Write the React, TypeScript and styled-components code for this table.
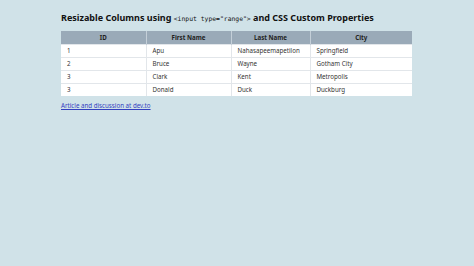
import React from "react";
import styled, { createGlobalStyle } from "styled-components";

const GlobalStyle = createGlobalStyle`
    html, body {
        margin: 0;
        padding: 0;
        background: #d0e2e8;
        font-family: "Noto Sans", "Open Sans", sans-serif;
    }
`;

const Page = styled.div`
    width: 474px;
    height: 266px;
    padding: 11px 0 0 61px;
    box-sizing: border-box;
`;

const Title = styled.h1`
    margin: 0 0 5px;
    font-size: 9px;
    font-weight: 700;
    color: #111;
    line-height: 14px;
    white-space: nowrap;

    code {
        font-family: "DejaVu Sans Mono", "Liberation Mono", monospace;
        font-size: 6.4px;
        font-weight: 400;
    }
`;

const Table = styled.table`
    border-collapse: collapse;
    table-layout: fixed;
    width: 351px;
    background: #fff;
    font-size: 6.2px;
    color: #333;
`;

const HeadCell = styled.th`
    height: 13px;
    padding: 0;
    box-sizing: border-box;
    background: #9aaab8;
    font-weight: 700;
    color: #222;
    text-align: center;
    border-left: 1px solid #c4cfd8;
    &:first-child {
        border-left: none;
    }
`;

const Row = styled.tr`
    border-top: 1px solid #e2e6ea;
`;

const Cell = styled.td`
    height: 12px;
    padding: 0 6px;
    border-left: 1px solid #e2e6ea;
    white-space: nowrap;
    overflow: hidden;
    &:first-child {
        border-left: none;
    }
`;

const Link = styled.a`
    display: block;
    width: max-content;
    margin-top: 5px;
    font-size: 6.2px;
    line-height: 9px;
    color: #3340c0;
    text-decoration: underline;
`;

const columns = [
    { label: "ID", w: 85 },
    { label: "First Name", w: 85 },
    { label: "Last Name", w: 79 },
    { label: "City", w: 102 },
];

const rows = [
    ["1", "Apu", "Nahasapeemapetilon", "Springfield"],
    ["2", "Bruce", "Wayne", "Gotham City"],
    ["3", "Clark", "Kent", "Metropolis"],
    ["3", "Donald", "Duck", "Duckburg"],
];

const App: React.FC = () => (
    <Page>
      <GlobalStyle />
      <Title>
        Resizable Columns using <code>&lt;input type="range"&gt;</code> and CSS Custom Properties
      </Title>
      <Table>
        <colgroup>
          {columns.map((c) => (
            <col key={c.label} style={{ width: c.w }} />
          ))}
        </colgroup>
        <thead>
          <tr>
            {columns.map((c) => (
              <HeadCell key={c.label}>{c.label}</HeadCell>
            ))}
          </tr>
        </thead>
        <tbody>
          {rows.map((r, i) => (
            <Row key={i}>
              {r.map((v, j) => (
                <Cell key={j}>{v}</Cell>
              ))}
            </Row>
          ))}
        </tbody>
      </Table>
      <Link href="#">Article and discussion at dev.to</Link>
    </Page>
);

export default App;
